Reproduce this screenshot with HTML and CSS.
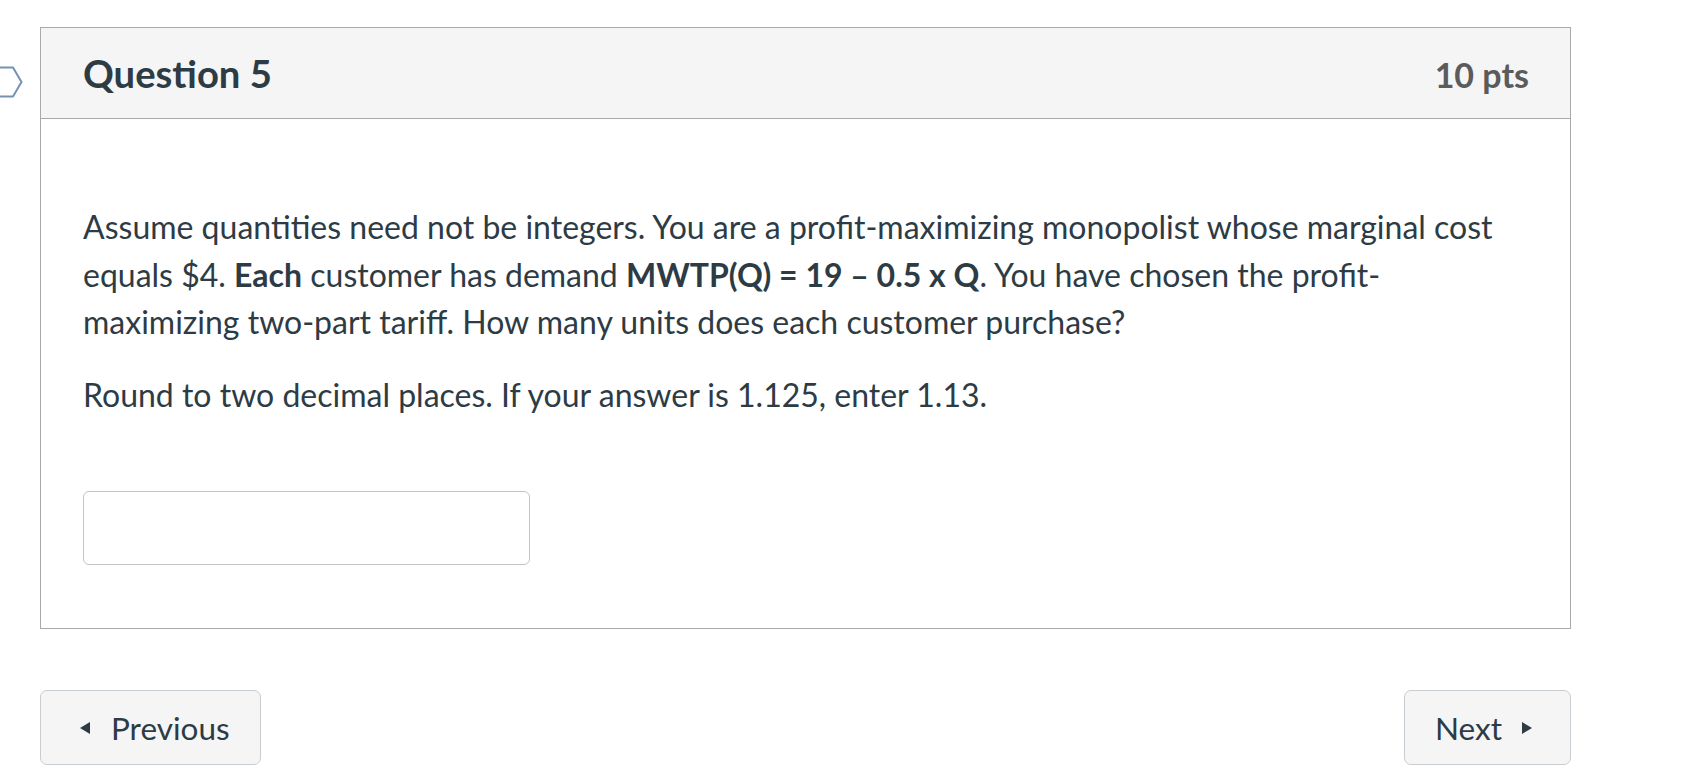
FILE: index.html
```html
<!DOCTYPE html>
<html lang="en">
<head>
<meta charset="utf-8">
<title>Question 5</title>
<link rel="stylesheet" href="styles.css">
</head>
<body>
<div class="page">
  <div class="question-wrap">
    <svg class="flag" width="24" height="32" viewBox="0 0 24 32" aria-hidden="true">
      <path d="M-4 1.5 H13 L21.5 16 L13 30.5 H-4" fill="none" stroke="#7492b1" stroke-width="2" stroke-linejoin="round"/>
    </svg>
    <div class="question">
      <div class="q-header">
        <h2 class="q-name">Question 5</h2>
        <span class="q-pts">10 pts</span>
      </div>
      <div class="q-body">
        <p class="q-text">Assume quantities need not be integers. You are a profit-maximizing monopolist whose marginal cost equals $4. <strong>Each</strong> customer has demand <strong>MWTP(Q) = 19 – 0.5 x Q</strong>. You have chosen the profit-maximizing two-part tariff. How many units does each customer purchase?</p>
        <p class="q-text">Round to two decimal places. If your answer is 1.125, enter 1.13.</p>
        <input class="answer" type="text" aria-label="Answer">
      </div>
    </div>
  </div>
  <div class="nav">
    <button class="nav-btn prev" type="button"><span class="tri tri-left"></span>Previous</button>
    <button class="nav-btn next" type="button">Next<span class="tri tri-right"></span></button>
  </div>
</div>
</body>
</html>
```
FILE: styles.css
```css
html, body {
  margin: 0;
  padding: 0;
  background: #ffffff;
}

body {
  font-family: Lato, "Open Sans", "Liberation Sans", sans-serif;
  color: #2d3b45;
}

.page {
  padding: 27px 0 0 40px;
  width: 1531px;
}

.question-wrap {
  position: relative;
}

.flag {
  position: absolute;
  left: -40px;
  top: 39px;
}

.question {
  border: 1px solid #aaaaaa;
  background: #ffffff;
}

.q-header {
  display: flex;
  align-items: baseline;
  justify-content: space-between;
  height: 91px;
  box-sizing: border-box;
  padding: 0 41px 0 42px;
  background: #f5f5f5;
  border-bottom: 1px solid #aaaaaa;
}

.q-name {
  margin: 0;
  font-size: 38.2px;
  font-weight: 700;
  line-height: 90px;
  color: #2d3b45;
}

.q-pts {
  font-size: 34px;
  font-weight: 700;
  line-height: 90px;
  color: #5b5b5b;
}

.q-body {
  padding: 84px 50px 63px 42px;
}

.q-text {
  margin: 0 0 25px 0;
  font-size: 32px;
  line-height: 47.6px;
}

.q-text strong {
  font-weight: 700;
}

.answer {
  display: block;
  margin-top: 73px;
  width: 447px;
  height: 74px;
  box-sizing: border-box;
  border: 1px solid #c4c4c4;
  border-radius: 6px;
  background: #ffffff;
  font-family: inherit;
  font-size: 28px;
  padding: 0 14px;
  outline: none;
}

.nav {
  display: flex;
  justify-content: space-between;
  margin-top: 61px;
}

.nav-btn {
  display: flex;
  align-items: center;
  height: 75px;
  box-sizing: border-box;
  border: 1px solid #c7cdd1;
  border-radius: 7px;
  background: #f5f5f5;
  color: #2d3b45;
  font-family: inherit;
  font-size: 31.5px;
  cursor: pointer;
}

.prev {
  padding: 0 30px 0 39px;
}

.next {
  padding: 0 38px 0 30px;
}

.tri {
  display: inline-block;
  width: 0;
  height: 0;
  border-top: 6px solid transparent;
  border-bottom: 6px solid transparent;
}

.tri-left {
  border-right: 10px solid #2d3b45;
  margin-right: 21px;
}

.tri-right {
  border-left: 10px solid #2d3b45;
  margin-left: 20px;
}
```
